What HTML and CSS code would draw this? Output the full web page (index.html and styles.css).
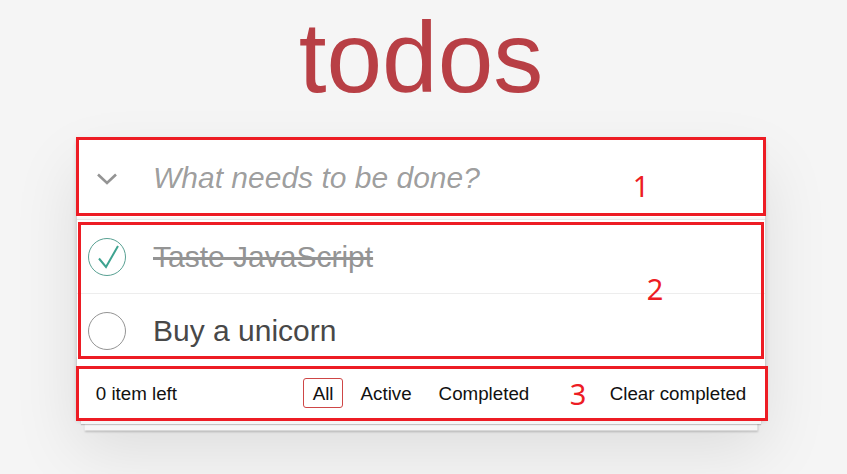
FILE: index.html
```html
<!DOCTYPE html>
<html lang="en">
<head>
    <meta charset="UTF-8">
    <meta name="viewport" content="width=device-width, initial-scale=1.0">
    <title>todos</title>
    <link rel="stylesheet" href="styles.css">
</head>
<body>
    <div class="page">
        <h1 class="title">todos</h1>

        <!-- APP CARD -->
        <section class="todoapp">
            <header class="new-row">
                <svg class="toggle-all" width="22" height="14" viewBox="0 0 22 14">
                    <polyline points="2,2.5 11,11 20,2.5" fill="none" stroke="#949494" stroke-width="2.6"/>
                </svg>
                <input class="new-todo" placeholder="What needs to be done?">
            </header>

            <ul class="todo-list">
                <li class="todo completed">
                    <svg class="toggle" width="40" height="40" viewBox="0 0 40 40">
                        <circle cx="20" cy="20" r="18.5" fill="none" stroke="#59a193" stroke-width="1"/>
                        <polyline points="12,21.5 19,30 31,9" fill="none" stroke="#3ea390" stroke-width="2"/>
                    </svg>
                    <label>Taste JavaScript</label>
                </li>
                <li class="todo">
                    <svg class="toggle" width="40" height="40" viewBox="0 0 40 40">
                        <circle cx="20" cy="20" r="18.5" fill="none" stroke="#949494" stroke-width="1"/>
                    </svg>
                    <label>Buy a unicorn</label>
                </li>
            </ul>

            <footer class="footer">
                <span class="count">0 item left</span>
                <ul class="filters">
                    <li><a class="selected" href="#/">All</a></li>
                    <li><a href="#/active">Active</a></li>
                    <li><a href="#/completed">Completed</a></li>
                </ul>
                <button class="clear">Clear completed</button>
            </footer>
        </section>
    </div>

    <!-- ANNOTATIONS -->
    <div class="note note-1"></div>
    <div class="note note-2"></div>
    <div class="note note-3"></div>
    <span class="note-num num-1">1</span>
    <span class="note-num num-2">2</span>
    <span class="note-num num-3">3</span>
</body>
</html>
```

FILE: styles.css
```css
/* GENERAL */
body {
    margin: 0;
    background-color: #f5f5f5;
    font-family: 'Liberation Sans', Arial, sans-serif;
    color: #111;
    position: relative;
    min-height: 474px;
}

.page {
    padding-right: 5px;
}

.title {
    margin: 7px 0 30px;
    height: 100px;
    font-size: 100px;
    line-height: 100px;
    font-weight: normal;
    text-align: center;
    color: #b83f45;
}

/* CARD */
.todoapp {
    width: 688px;
    margin: 0 auto;
    background: #fff;
    box-shadow: 0 2.5px 5px 0 rgba(0, 0, 0, 0.2), 0 31px 62px 0 rgba(0, 0, 0, 0.1);
}

.new-row {
    height: 82px;
    display: flex;
    align-items: center;
    box-shadow: inset 0 -2px 1px rgba(0, 0, 0, 0.03);
}

.toggle-all {
    margin: 2px 0 0 19px;
    flex: none;
}

.new-todo {
    flex: 1;
    margin-left: 35px;
    padding: 0 19px 0 0;
    height: 42px;
    border: none;
    outline: none;
    background: transparent;
    font-family: inherit;
    font-size: 30px;
    line-height: 42px;
    color: #484848;
}

.new-todo::placeholder {
    font-style: italic;
    color: rgba(0, 0, 0, 0.4);
}

/* LIST */
.todo-list {
    margin: 0;
    padding: 0;
    list-style: none;
    border-top: 1px solid #e6e6e6;
}

.todo {
    height: 73px;
    display: flex;
    align-items: center;
    border-bottom: 1px solid #ededed;
    font-size: 30px;
    line-height: 36px;
    color: #484848;
}

.todo:last-child {
    border-bottom: none;
}

.toggle {
    flex: none;
    margin-left: 9.5px;
}

.todo label {
    margin-left: 26.5px;
}

.todo.completed label {
    color: #949494;
    text-decoration: line-through;
}

/* FOOTER */
.footer {
    position: relative;
    display: grid;
    grid-template-columns: 1fr auto 1fr;
    align-items: center;
    padding: 12.5px 18.75px;
    border-top: 1px solid #e6e6e6;
    font-size: 18.75px;
    line-height: 25px;
    color: #111;
}

.footer::before {
    content: '';
    position: absolute;
    left: 0;
    right: 0;
    bottom: 0;
    height: 62px;
    overflow: hidden;
    box-shadow: 0 1px 1px rgba(0, 0, 0, 0.2),
                0 10px 0 -4px #f6f6f6,
                0 11px 1px -4px rgba(0, 0, 0, 0.2),
                0 20px 0 -7.5px #f6f6f6,
                0 21px 2px -7.5px rgba(0, 0, 0, 0.2);
}

.count {
    justify-self: start;
}

.filters {
    display: flex;
    margin: 0;
    padding: 0;
    list-style: none;
}

.filters a {
    margin: 3.75px;
    padding: 3.75px 8.75px;
    border: 1px solid transparent;
    border-radius: 3px;
    color: inherit;
    text-decoration: none;
}

.filters a.selected {
    border-color: #ce4646;
}

.clear {
    justify-self: end;
    padding: 0;
    border: none;
    background: none;
    font-family: inherit;
    font-size: inherit;
    line-height: 25px;
    color: inherit;
    cursor: pointer;
}

/* ANNOTATIONS (drawn over the page) */
.note {
    position: absolute;
    box-sizing: border-box;
    border: 3px solid #ed1c24;
}

.note-1 {
    left: 76px;
    top: 137px;
    width: 690px;
    height: 79px;
}

.note-2 {
    left: 78px;
    top: 222px;
    width: 686px;
    height: 137px;
}

.note-3 {
    left: 76px;
    top: 366px;
    width: 692px;
    height: 55px;
}

.note-num {
    position: absolute;
    width: 30px;
    text-align: center;
    font-family: 'Noto Sans', sans-serif;
    font-size: 29px;
    line-height: 29px;
    color: #ed1c24;
}

.num-1 {
    left: 626px;
    top: 171px;
}

.num-2 {
    left: 640px;
    top: 274px;
}

.num-3 {
    left: 563px;
    top: 379px;
}
```
